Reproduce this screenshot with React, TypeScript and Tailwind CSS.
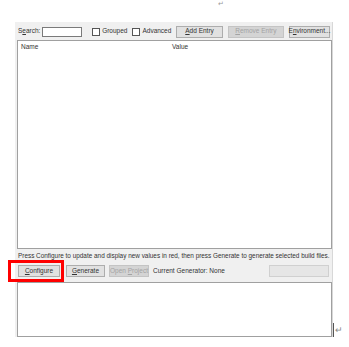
import React from "react";

const font = { fontFamily: '"Liberation Sans", Arial, sans-serif' };

function Btn({ children, className = "", disabled = false }: { children: React.ReactNode; className?: string; disabled?: boolean }) {
  return (
    <div
      className={
        "flex items-center justify-center h-[12px] border text-[6.5px] leading-none " +
        (disabled
          ? "bg-[#d4d4d4] border-[#c4c4c4] text-[#a3a3a3] "
          : "bg-[#e1e1e1] border-[#adadad] text-[#333] ") +
        className
      }
    >
      {children}
    </div>
  );
}

function Check({ label }: { label: string }) {
  return (
    <div className="flex items-center gap-[2px]">
      <div className="w-[8px] h-[8px] border border-[#555] bg-white" />
      <span className="text-[6.5px] text-[#333] leading-none">{label}</span>
    </div>
  );
}

export default function App() {
  return (
    <div className="relative w-[349px] h-[347px] bg-white overflow-hidden" style={font}>
      <span className="absolute left-[218px] top-[0px] text-[7px] text-[#999] leading-none">↵</span>
      <div className="ml-[15px] mt-[22px] w-[318px] h-[315px] bg-[#f0f0f0] border-r border-[#d8d8d8] flex flex-col px-[2px]">
        <div className="flex items-center h-[11px] mt-[4px]">
          <span className="ml-[1px] text-[6.5px] text-[#333] leading-none w-[24px]">
            S<span className="underline">e</span>arch:
          </span>
          <div className="w-[41px] h-[10px] border border-[#7a7a7a] bg-white" />
          <div className="ml-[10px]"><Check label="Grouped" /></div>
          <div className="ml-[5px]"><Check label="Advanced" /></div>
          <Btn className="ml-[5px] w-[47px]"><span><span className="underline">A</span>dd Entry</span></Btn>
          <Btn className="ml-[5px] w-[57px]" disabled><span><span className="underline">R</span>emove Entry</span></Btn>
          <Btn className="ml-[5px] w-[41px]"><span>E<span className="underline">n</span>vironment...</span></Btn>
        </div>
        <div className="mt-[3px] h-[209px] w-[315px] border border-[#a0a0a0] bg-white flex flex-col">
          <div className="flex h-[10px] mt-[1px] items-center text-[6.5px] text-[#333] leading-none">
            <span className="ml-[3px] w-[151px]">Name</span>
            <span>Value</span>
          </div>
        </div>
        <div className="mt-[3px] h-[9px] flex items-center text-[6.4px] text-[#333] leading-none whitespace-nowrap">
          <span className="ml-[1px]">Press Configure to update and display new values in red, then press Generate to generate selected build files.</span>
        </div>
        <div className="mt-[4px] flex items-center h-[12px]">
          <Btn className="ml-[1px] w-[42px]"><span><span className="underline">C</span>onfigure</span></Btn>
          <Btn className="ml-[6px] w-[39px]"><span><span className="underline">G</span>enerate</span></Btn>
          <Btn className="ml-[4px] w-[40px]" disabled><span>Open <span className="underline">P</span>roject</span></Btn>
          <span className="ml-[4px] text-[6.5px] text-[#333] leading-none">Current Generator: None</span>
          <div className="ml-auto mr-[1px] w-[60px] h-[12px] bg-[#e6e6e6] border border-[#d0d0d0]" />
        </div>
        <div className="mt-[5px] h-[55px] w-[315px] border border-[#a0a0a0] bg-white" />
      </div>
      <div className="absolute left-[8px] top-[260px] w-[56px] h-[22px] border-[3px] border-[#ff0000]" />
      <div className="absolute left-[333px] top-[323px] w-[1px] h-[14px] bg-[#555]" />
      <span className="absolute left-[335px] top-[326px] text-[9px] text-[#888] leading-none">↵</span>
    </div>
  );
}
